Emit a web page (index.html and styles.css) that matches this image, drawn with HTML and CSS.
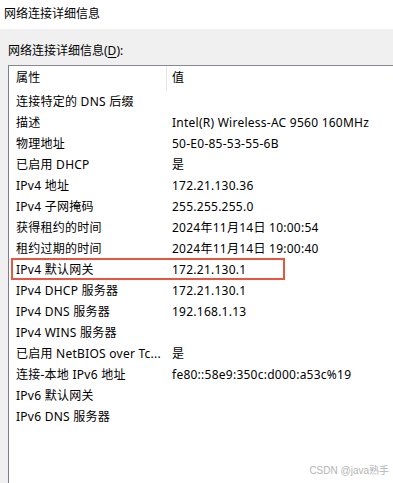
FILE: index.html
```html
<!DOCTYPE html>
<html lang="zh-CN">
<head>
    <meta charset="UTF-8">
    <meta name="viewport" content="width=device-width, initial-scale=1.0">
    <title>网络连接详细信息</title>
    <link rel="stylesheet" href="styles.css">
</head>
<body>
    <div class="titlebar">网络连接详细信息</div>

    <div class="panel">
        <div class="caption">网络连接详细信息(<u>D</u>):</div>

        <div class="listbox">
            <div class="row head">
                <div class="col name">属性</div>
                <div class="col value">值</div>
            </div>
            <div class="row"><div class="col name">连接特定的 DNS 后缀</div><div class="col value"></div></div>
            <div class="row"><div class="col name">描述</div><div class="col value">Intel(R) Wireless-AC 9560 160MHz</div></div>
            <div class="row"><div class="col name">物理地址</div><div class="col value">50-E0-85-53-55-6B</div></div>
            <div class="row"><div class="col name">已启用 DHCP</div><div class="col value">是</div></div>
            <div class="row"><div class="col name">IPv4 地址</div><div class="col value">172.21.130.36</div></div>
            <div class="row"><div class="col name">IPv4 子网掩码</div><div class="col value">255.255.255.0</div></div>
            <div class="row"><div class="col name">获得租约的时间</div><div class="col value">2024年11月14日 10:00:54</div></div>
            <div class="row"><div class="col name">租约过期的时间</div><div class="col value">2024年11月14日 19:00:40</div></div>
            <div class="row marked"><div class="col name">IPv4 默认网关</div><div class="col value">172.21.130.1</div></div>
            <div class="row"><div class="col name">IPv4 DHCP 服务器</div><div class="col value">172.21.130.1</div></div>
            <div class="row"><div class="col name">IPv4 DNS 服务器</div><div class="col value">192.168.1.13</div></div>
            <div class="row"><div class="col name">IPv4 WINS 服务器</div><div class="col value"></div></div>
            <div class="row"><div class="col name">已启用 NetBIOS over Tc...</div><div class="col value">是</div></div>
            <div class="row"><div class="col name">连接-本地 IPv6 地址</div><div class="col value">fe80::58e9:350c:d000:a53c%19</div></div>
            <div class="row"><div class="col name">IPv6 默认网关</div><div class="col value"></div></div>
            <div class="row"><div class="col name">IPv6 DNS 服务器</div><div class="col value"></div></div>

            <div class="watermark">CSDN @java熟手</div>
        </div>
    </div>
</body>
</html>
```

FILE: styles.css
```css
html, body {
    height: 100%;
}
body {
    margin: 0;
    font-family: "Noto Sans", "Noto Sans CJK SC", sans-serif;
    font-size: 12px;
    color: #000;
    background: #fff;
    display: flex;
    flex-direction: column;
    overflow: hidden;
}
.titlebar {
    height: 29px;
    line-height: 28px;
    padding-left: 4px;
    background: #fff;
    flex: none;
}
.panel {
    flex: 1;
    background: #f0f0f0;
    padding: 13px 0 0 8px;
    display: flex;
    flex-direction: column;
}
.caption {
    height: 23px;
    line-height: 17px;
}
.caption u {
    text-underline-offset: 2px;
}
.listbox {
    flex: 1;
    position: relative;
    background: #fff;
    border-top: 1px solid #858992;
    border-left: 1px solid #7a7e88;
    overflow: hidden;
}
.row {
    display: flex;
    height: 21px;
    line-height: 21px;
    white-space: nowrap;
    position: relative;
    letter-spacing: 0.25px;
}
.row.head {
    height: 25px;
    line-height: 24px;
}
.col.name {
    width: 150px;
    flex: none;
    padding-left: 7px;
    overflow: hidden;
}
.col.value {
    padding-left: 6px;
}
.row.head .col.name {
    border-right: 1px solid #e5e5e5;
}
.row.head .col.value {
    padding-left: 5px;
}
.row.marked::after {
    content: "";
    position: absolute;
    left: 2px;
    top: -1px;
    width: 274px;
    height: 22px;
    border: 2px solid #e8563f;
    box-sizing: border-box;
}
.watermark {
    position: absolute;
    right: 4px;
    bottom: 6px;
    font-family: "Liberation Sans", "Noto Sans CJK SC", sans-serif;
    font-size: 10px;
    color: #b4b4b4;
}
```
